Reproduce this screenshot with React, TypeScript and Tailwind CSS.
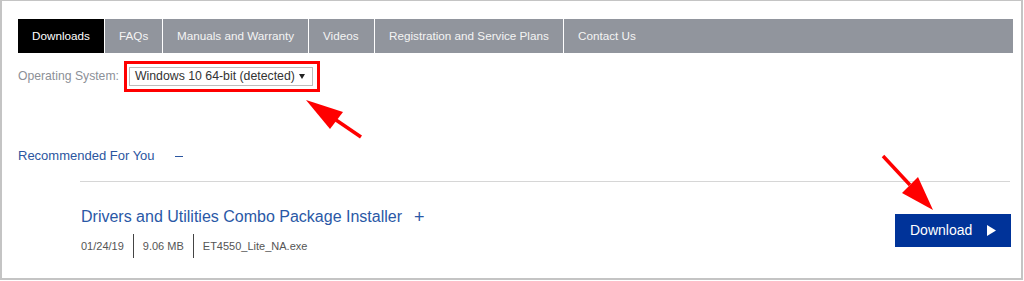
const tabs = [
  { label: 'Downloads', w: 'w-[87px]', active: true },
  { label: 'FAQs', w: 'w-[58px]' },
  { label: 'Manuals and Warranty', w: 'w-[146px]' },
  { label: 'Videos', w: 'w-[66px]' },
  { label: 'Registration and Service Plans', w: 'w-[189px]' },
];

const App = () => {
  return (
    <div className="relative w-[1024px] h-[281px] bg-white font-['Liberation_Sans',Arial,sans-serif]">
      <div className="w-[1023px] h-[280px] border-2 border-t border-[#c4c4c4] pl-4 pr-2 pt-[18px]">
        {/* tab bar */}
        <div className="flex h-[34px] w-[995px] bg-[#91959d] text-[11.7px] text-[#f4f4f4]">
          {tabs.map((t) => (
            <div
              key={t.label}
              className={`${t.w} flex items-center pl-[14px] border-r border-white ${t.active ? 'bg-black text-white' : ''}`}
            >
              {t.label}
            </div>
          ))}
          <div className="flex items-center pl-[14px]">Contact Us</div>
        </div>

        {/* operating system */}
        <div className="flex items-center mt-2">
          <span className="text-[12.2px] text-[#8c9097]">Operating System:</span>
          <div className="ml-[5px] w-[196px] border-[3px] border-[#ff0000] pl-[2px] pr-[4px] py-[3px]">
            <div className="flex items-center h-[19px] border border-[#bdbdbd] pl-[5px] pr-[7px] text-[12.3px] text-[#333]">
              <span>Windows 10 64-bit (detected)</span>
              <svg className="ml-auto" width="6" height="5" viewBox="0 0 6 5">
                <polygon points="0,0 6,0 3,5" fill="#222" />
              </svg>
            </div>
          </div>
        </div>

        {/* recommended */}
        <div className="flex items-center mt-[56px] h-4 text-[13px] text-[#2b56a0]">
          <span>Recommended For You</span>
          <span className="ml-[20px] w-2 h-px bg-[#2b56a0]" />
        </div>
        <div className="ml-[62px] mt-[17px] w-[930px] h-px bg-[#d6d6d6]" />

        {/* item */}
        <div className="flex justify-between ml-[63px] mt-[25px] w-[930px]">
          <div>
            <div className="flex items-center h-5 text-[16px] text-[#2a58a6]">
              <span>Drivers and Utilities Combo Package Installer</span>
              <span className="ml-[12px] text-[18px] leading-5">+</span>
            </div>
            <div className="flex items-center mt-[7px] text-[11px] text-[#555]">
              <span>01/24/19</span>
              <span className="mx-[9px] w-px h-6 bg-[#444]" />
              <span>9.06 MB</span>
              <span className="mx-[9px] w-px h-6 bg-[#444]" />
              <span>ET4550_Lite_NA.exe</span>
            </div>
          </div>
          <button className="mt-[7px] flex items-center w-[116px] h-[33px] bg-[#003399] pl-[15px] text-[14px] text-white">
            <span>Download</span>
            <svg className="ml-[15px]" width="9" height="11" viewBox="0 0 9 11">
              <polygon points="0,0 9,5.5 0,11" fill="#fff" />
            </svg>
          </button>
        </div>
      </div>

      {/* annotation arrows */}
      <svg className="absolute left-0 top-0 pointer-events-none" width="1024" height="281">
        <line x1="336" y1="120" x2="361" y2="137" stroke="#ff0000" strokeWidth="3.5" />
        <polygon points="306,100 343,112 330,129" fill="#ff0000" />
        <line x1="910" y1="185" x2="883" y2="156" stroke="#ff0000" strokeWidth="3.5" />
        <polygon points="933,210 918,177 902,193" fill="#ff0000" />
      </svg>
    </div>
  );
};

export default App;
